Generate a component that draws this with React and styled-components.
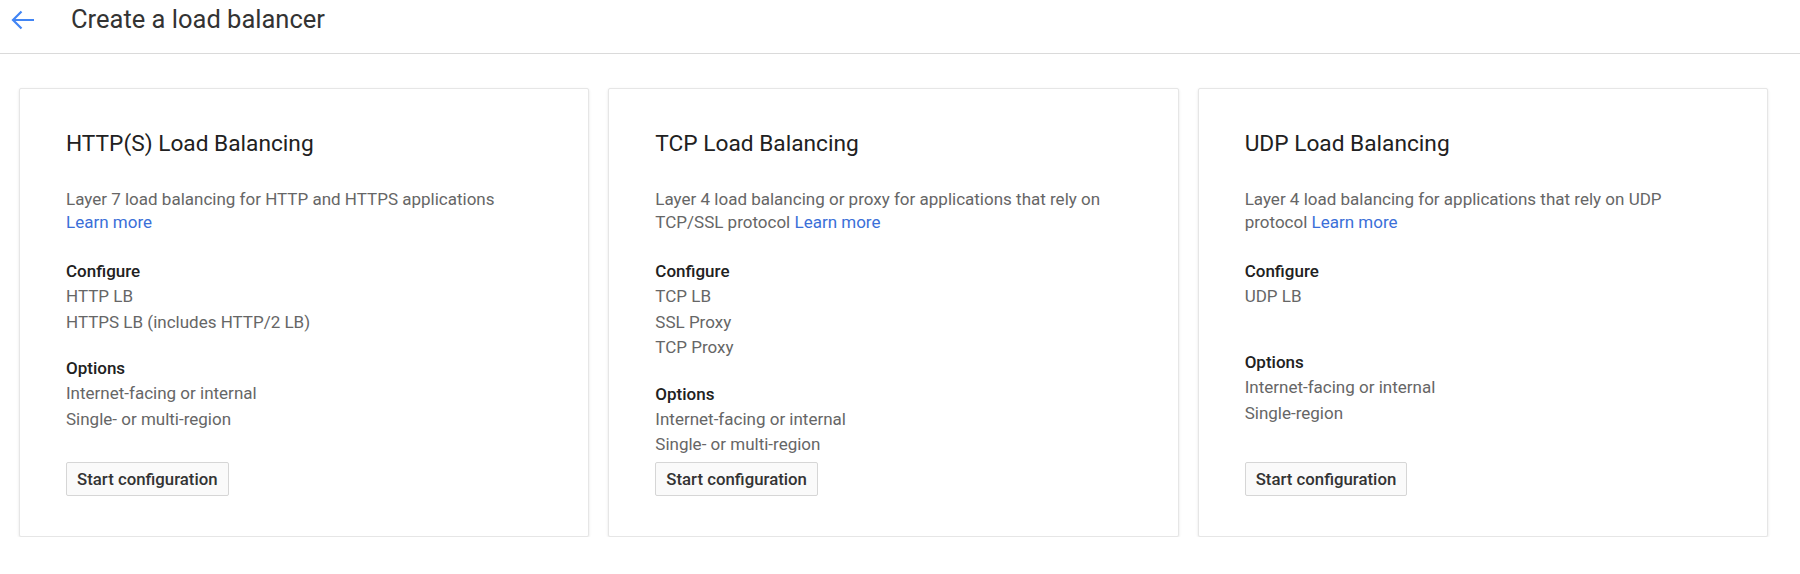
import React from 'react'
import styled, { createGlobalStyle } from 'styled-components'

const GlobalStyle = createGlobalStyle`
  * { box-sizing: border-box; }
  body {
    margin: 0;
    background: #fff;
    font-family: Roboto, "Liberation Sans", Arial, sans-serif;
    -webkit-font-smoothing: antialiased;
  }
`

const Header = styled.div`
  display: flex;
  align-items: center;
  height: 54px;
  padding: 0 0 16px 11px;
  border-bottom: 1px solid #dadada;
`

const BackButton = styled.button`
  display: flex;
  align-items: center;
  justify-content: center;
  padding: 0;
  margin: 3px 0 0 0;
  border: none;
  background: none;
  cursor: pointer;
`

const Title = styled.h1`
  margin: 0 0 0 36px;
  font-size: 25.5px;
  line-height: 30px;
  font-weight: 400;
  color: #333;
`

const CardRow = styled.div`
  display: flex;
  gap: 19px;
  padding: 34px 32px 0 19px;
`

const Card = styled.div`
  flex: 1;
  display: flex;
  flex-direction: column;
  padding: 41px 60px 40px 46px;
  border: 1px solid #e6e6e6;
  border-radius: 2px;
  box-shadow: 0 1px 3px rgba(0, 0, 0, 0.1);
  background: #fff;
`

const CardTitle = styled.h2`
  margin: 0;
  font-size: 22.7px;
  line-height: 28px;
  font-weight: 400;
  color: #212121;
`

const Description = styled.p`
  margin: 30px 0 0;
  font-size: 17px;
  line-height: 23px;
  color: #666;
`

const Link = styled.a`
  color: #3b6fd8;
  text-decoration: none;
  white-space: nowrap;
`

const Section = styled.div`
  margin-top: ${(p) => p.$gap}px;
  min-height: ${(p) => p.$minHeight || 0}px;
`

const SectionLabel = styled.div`
  font-size: 17px;
  line-height: 26px;
  font-weight: 500;
  color: #212121;
`

const Item = styled.div`
  font-size: 17px;
  line-height: 25.5px;
  color: #666;
`

const StartButton = styled.button`
  align-self: flex-start;
  margin-top: auto;
  height: 34px;
  padding: 0 10px;
  border: 1px solid #d6d6d6;
  border-radius: 2px;
  background: #fafafa;
  font-family: inherit;
  font-size: 16.8px;
  font-weight: 500;
  color: #333;
  cursor: pointer;
`

const ButtonGap = styled.div`
  height: 4px;
`

const cards = [
  {
    title: 'HTTP(S) Load Balancing',
    text: 'Layer 7 load balancing for HTTP and HTTPS applications',
    configure: ['HTTP LB', 'HTTPS LB (includes HTTP/2 LB)'],
    options: ['Internet-facing or internal', 'Single- or multi-region'],
  },
  {
    title: 'TCP Load Balancing',
    text: 'Layer 4 load balancing or proxy for applications that rely on TCP/SSL protocol',
    configure: ['TCP LB', 'SSL Proxy', 'TCP Proxy'],
    options: ['Internet-facing or internal', 'Single- or multi-region'],
  },
  {
    title: 'UDP Load Balancing',
    text: 'Layer 4 load balancing for applications that rely on UDP protocol',
    configure: ['UDP LB'],
    options: ['Internet-facing or internal', 'Single-region'],
  },
]

function BackArrow() {
  return (
    <svg width="24" height="20" viewBox="0 0 24 20" fill="none">
      <path d="M23 10H2.5M10.5 1.5L2 10l8.5 8.5" stroke="#4285f4" strokeWidth="2.2" />
    </svg>
  )
}

export default function App() {
  return (
    <>
      <GlobalStyle />
      <Header>
        <BackButton aria-label="Back"><BackArrow /></BackButton>
        <Title>Create a load balancer</Title>
      </Header>
      <CardRow>
        {cards.map((c) => (
          <Card key={c.title}>
            <CardTitle>{c.title}</CardTitle>
            <Description>
              {c.text} <Link href="#">Learn more</Link>
            </Description>
            <Section $gap={24} $minHeight={71}>
              <SectionLabel>Configure</SectionLabel>
              {c.configure.map((i) => <Item key={i}>{i}</Item>)}
            </Section>
            <Section $gap={20}>
              <SectionLabel>Options</SectionLabel>
              {c.options.map((i) => <Item key={i}>{i}</Item>)}
            </Section>
            <ButtonGap />
            <StartButton>Start configuration</StartButton>
          </Card>
        ))}
      </CardRow>
    </>
  )
}
